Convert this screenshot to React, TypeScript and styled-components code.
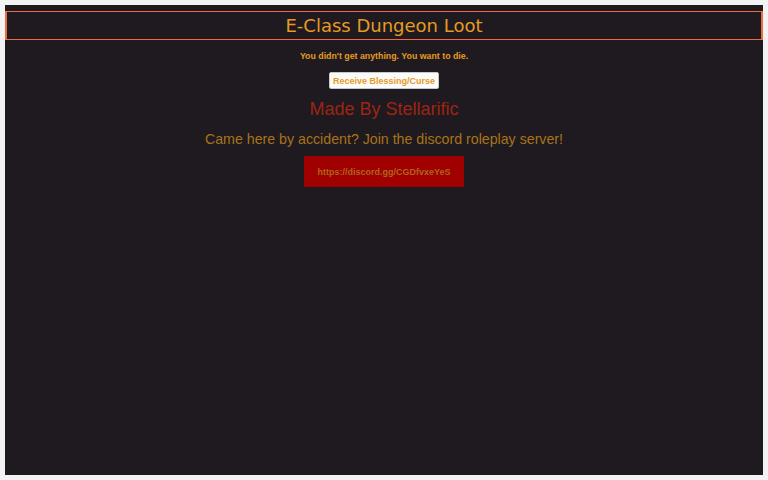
import styled, { createGlobalStyle } from "styled-components";

const GlobalStyle = createGlobalStyle`
  html, body {
    margin: 0;
    padding: 0;
    background: #f3f3f3;
  }
  body {
    padding: 5px;
    font-family: "Liberation Sans", Arial, sans-serif;
  }
`;

export default function App() {
  return (
    <>
      <GlobalStyle />
      <Panel>
        <Header>
          <Title>E-Class Dungeon Loot</Title>
        </Header>
        <Result>You didn't get anything. You want to die.</Result>
        <RollButton>Receive Blessing/Curse</RollButton>
        <Credit>Made By Stellarific</Credit>
        <Invite>Came here by accident? Join the discord roleplay server!</Invite>
        <DiscordLink href="#">https://discord.gg/CGDfvxeYeS</DiscordLink>
      </Panel>
    </>
  );
}

const Panel = styled.div`
  width: 758px;
  height: 470px;
  background: #1e1a1f;
  display: flex;
  flex-direction: column;
  align-items: center;
  padding-top: 6px;
  box-sizing: border-box;
`;

const Header = styled.div`
  width: 100%;
  height: 29px;
  box-sizing: border-box;
  border: 1px solid #ee6a40;
  border-left-width: 2px;
  border-right-width: 2px;
  display: flex;
  align-items: center;
  justify-content: center;
`;

const Title = styled.h1`
  margin: 0;
  font-family: "DejaVu Sans", sans-serif;
  font-weight: normal;
  font-size: 18px;
  color: #e59a24;
`;

const Result = styled.p`
  margin: 11px 0 0;
  font-size: 8.8px;
  font-weight: bold;
  color: #e59a24;
`;

const RollButton = styled.button`
  margin-top: 11px;
  height: 17px;
  padding: 0 3px;
  background: #fbfbfb;
  border: 1px solid #c8c8c8;
  border-radius: 2px;
  font-family: "Liberation Sans", Arial, sans-serif;
  font-size: 9px;
  font-weight: bold;
  color: #e59a24;
`;

const Credit = styled.div`
  margin-top: 10px;
  font-size: 18px;
  color: #9e2414;
`;

const Invite = styled.div`
  margin-top: 11px;
  font-size: 14.2px;
  color: #a8731a;
`;

const DiscordLink = styled.a`
  margin-top: 9px;
  width: 160px;
  height: 31px;
  display: flex;
  align-items: center;
  justify-content: center;
  background: #a00000;
  font-size: 9px;
  font-weight: bold;
  color: #b0641c;
  text-decoration: none;
`;
